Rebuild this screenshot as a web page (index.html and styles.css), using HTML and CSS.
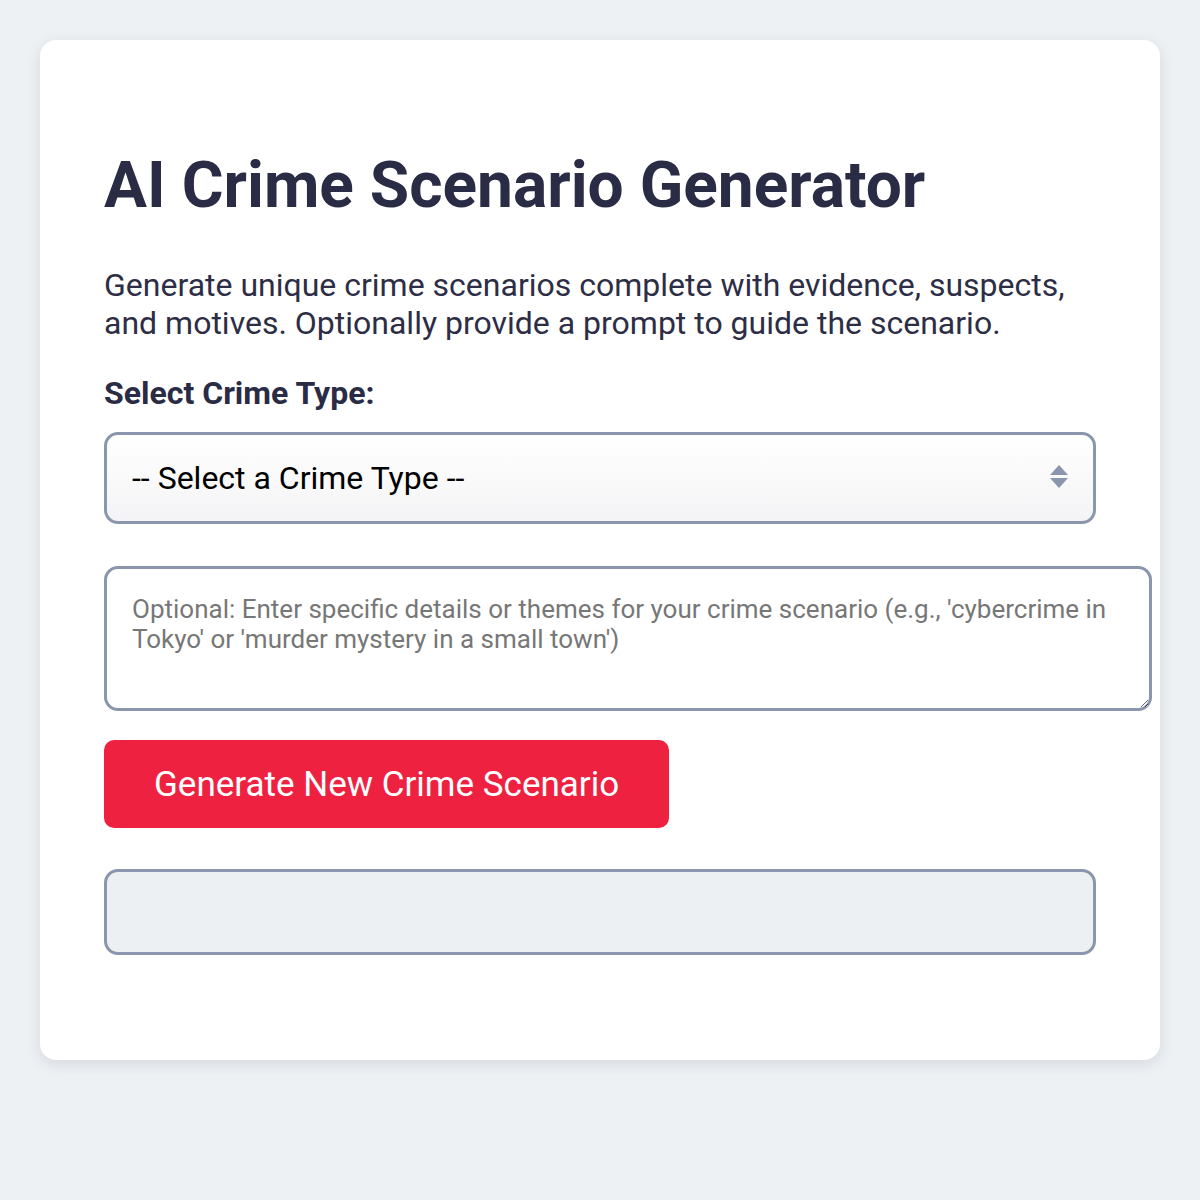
FILE: index.html
```html
<!DOCTYPE html>
<html lang="en">
<head>
<meta charset="utf-8">
<title>AI Crime Scenario Generator</title>
<link rel="stylesheet" href="styles.css">
</head>
<body>
<main class="card">
  <h1 class="title">AI Crime Scenario Generator</h1>
  <p class="intro">Generate unique crime scenarios complete with evidence, suspects, and motives. Optionally provide a prompt to guide the scenario.</p>
  <label class="label" for="crime-type">Select Crime Type:</label>
  <div class="select-wrap">
    <select id="crime-type" class="select">
      <option>-- Select a Crime Type --</option>
      <option>Murder</option>
      <option>Theft</option>
      <option>Cybercrime</option>
    </select>
    <svg class="select-arrows" width="18" height="24" viewBox="0 0 18 24" aria-hidden="true">
      <path d="M9 0 L18 10 L0 10 Z" fill="#8a96ad"/>
      <path d="M0 13 L18 13 L9 23 Z" fill="#8a96ad"/>
    </svg>
  </div>
  <textarea class="prompt" placeholder="Optional: Enter specific details or themes for your crime scenario (e.g., 'cybercrime in Tokyo' or 'murder mystery in a small town')"></textarea>
  <button class="generate" type="button">Generate New Crime Scenario</button>
  <div class="output"></div>
</main>
</body>
</html>
```
FILE: styles.css
```css
html, body {
  margin: 0;
  padding: 0;
}
body {
  background: #edf1f4;
  font-family: Roboto, "Noto Sans", "Liberation Sans", sans-serif;
  padding: 40px;
}
.card {
  background: #ffffff;
  border-radius: 16px;
  box-shadow: 0 4px 14px rgba(40, 50, 70, 0.12);
  padding: 64px 64px 104px 64px;
  display: flex;
  flex-direction: column;
  align-items: flex-start;
  min-height: 1020px;
  box-sizing: border-box;
}
.title {
  margin: 44px 0 0 0;
  font-size: 64px;
  line-height: 76px;
  font-weight: 700;
  color: #2a2b45;
}
.intro {
  margin: 42px 0 0 0;
  font-size: 32px;
  line-height: 38px;
  color: #2d2e45;
  max-width: 992px;
}
.label {
  margin-top: 32px;
  font-size: 32px;
  line-height: 38px;
  font-weight: 700;
  color: #2a2b45;
}
.select-wrap {
  position: relative;
  margin-top: 20px;
  width: 992px;
}
.select {
  appearance: none;
  -webkit-appearance: none;
  width: 100%;
  height: 92px;
  box-sizing: border-box;
  border: 3px solid #8a96ad;
  border-radius: 14px;
  background: linear-gradient(#ffffff, #f4f4f6);
  padding: 0 25px;
  font-family: Roboto, "Noto Sans", "Liberation Sans", sans-serif;
  font-size: 32px;
  color: #000000;
}
.select-arrows {
  position: absolute;
  right: 28px;
  top: 33px;
  pointer-events: none;
}
.prompt {
  margin-top: 42px;
  width: 1048px;
  height: 145px;
  box-sizing: border-box;
  border: 3px solid #8a96ad;
  border-radius: 14px;
  padding: 25px 25px;
  font-family: Roboto, "Noto Sans", "Liberation Sans", sans-serif;
  font-size: 26px;
  line-height: 30px;
  color: #333;
  background: #ffffff;
  resize: both;
}
.prompt::placeholder {
  color: #777777;
}
.generate {
  margin-top: 29px;
  height: 88px;
  padding: 0 50px;
  border: none;
  border-radius: 10px;
  background: #ee2240;
  color: #ffffff;
  font-family: Roboto, "Noto Sans", "Liberation Sans", sans-serif;
  font-size: 35px;
  cursor: pointer;
}
.output {
  margin-top: 41px;
  width: 992px;
  height: 86px;
  box-sizing: border-box;
  border: 3px solid #8a96ad;
  border-radius: 14px;
  background: #ecf0f3;
}
```
